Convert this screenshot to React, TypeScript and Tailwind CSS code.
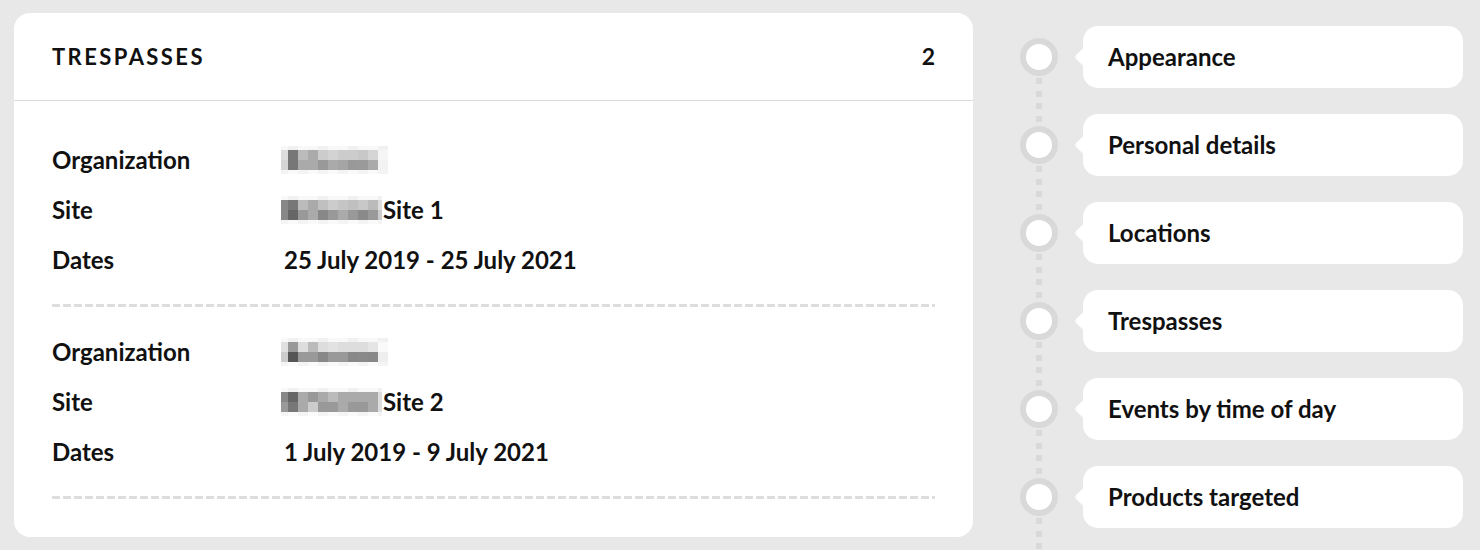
import React from "react";

type Cell = string;

interface MosaicProps {
  widths: number[];
  rows: Cell[][];
}

// pixelated (redacted) text block
function Mosaic({ widths, rows }: MosaicProps) {
  const total = widths.reduce((a, b) => a + b, 0);
  const rowH = 10;
  const h = rows.length * rowH + 8;
  let x = 0;
  const xs = widths.map((w) => {
    const v = x;
    x += w;
    return v;
  });
  return (
    <svg width={total} height={h} viewBox={`0 0 ${total} ${h}`} className="block shrink-0 -ml-[2px]" shapeRendering="crispEdges">
      {widths.map((w, i) => (
        <rect key={`t${i}`} x={xs[i]} y={0} width={w} height={4} fill={i % 3 === 1 ? "#f1f1f1" : "#f8f8f8"} />
      ))}
      {rows.map((row, r) =>
        row.map((c, i) => <rect key={`${r}-${i}`} x={xs[i]} y={4 + r * rowH} width={widths[i]} height={rowH} fill={c} />)
      )}
      {widths.map((w, i) => (
        <rect key={`b${i}`} x={xs[i]} y={4 + rows.length * rowH} width={w} height={4} fill={i % 2 === 0 ? "#f4f4f4" : "#fafafa"} />
      ))}
    </svg>
  );
}

const orgWidths = [7, 10, 10, 10, 10, 10, 10, 10, 10, 10, 10];
const siteWidths = [7, 10, 10, 10, 10, 10, 10, 10, 10, 10, 4];

const trespasses = [
  {
    org: [
      ["#dddddd", "#777777", "#bbbbbb", "#aaaaaa", "#cccccc", "#d3d3d3", "#cccccc", "#cccccc", "#c8c8c8", "#d5d5d5", "#f6f6f6"],
      ["#d5d5d5", "#777777", "#aaaaaa", "#aaaaaa", "#999999", "#aaaaaa", "#a5a5a5", "#999999", "#9a9a9a", "#aaaaaa", "#f3f3f3"],
    ],
    site: [
      ["#888888", "#777777", "#bbbbbb", "#aaaaaa", "#c0c0c0", "#cccccc", "#c5c5c5", "#c0c0c0", "#c8c8c8", "#bbbbbb", "#dddddd"],
      ["#888888", "#666666", "#999999", "#aaaaaa", "#888888", "#999999", "#aaaaaa", "#999999", "#8a8a8a", "#999999", "#cccccc"],
    ],
    siteName: "Site 1",
    dates: "25 July 2019 - 25 July 2021",
  },
  {
    org: [
      ["#e0e0e0", "#999999", "#dddddd", "#bbbbbb", "#dddddd", "#e2e2e2", "#dddddd", "#dddddd", "#dddddd", "#e5e5e5", "#fafafa"],
      ["#cccccc", "#555555", "#999999", "#999999", "#888888", "#999999", "#999999", "#888888", "#8a8a8a", "#888888", "#eeeeee"],
    ],
    site: [
      ["#888888", "#666666", "#aaaaaa", "#999999", "#aaaaaa", "#bbbbbb", "#aaaaaa", "#aaaaaa", "#aaaaaa", "#aaaaaa", "#dddddd"],
      ["#999999", "#777777", "#aaaaaa", "#cccccc", "#999999", "#999999", "#aaaaaa", "#999999", "#999999", "#aaaaaa", "#dddddd"],
    ],
    siteName: "Site 2",
    dates: "1 July 2019 - 9 July 2021",
  },
];

const sections = ["Appearance", "Personal details", "Locations", "Trespasses", "Events by time of day", "Products targeted"];

export default function App() {
  return (
    <div
      className="h-[550px] overflow-hidden bg-[#e8e8e8] flex items-start pt-[13px] pl-[14px] text-[#111]"
      style={{ fontFamily: "Lato, 'Noto Sans', sans-serif" }}
    >
      <div className="w-[959px] bg-white rounded-[16px]">
        <div className="h-[88px] flex items-center justify-between px-[38px] border-b border-[#dcdcdc]">
          <h2 className="text-[22px] font-bold tracking-[0.11em] uppercase">Trespasses</h2>
          <span className="text-[23px] font-bold">2</span>
        </div>
        <div className="px-[38px] pt-[34px] pb-[38px]">
          {trespasses.map((t, i) => (
            <div key={i} className={i > 0 ? "pt-[20px]" : ""}>
              <div className="text-[24px] font-bold leading-[50px]">
                <div className="flex items-center">
                  <span className="w-[231px]">Organization</span>
                  <Mosaic widths={orgWidths} rows={t.org} />
                </div>
                <div className="flex items-center">
                  <span className="w-[231px]">Site</span>
                  <Mosaic widths={siteWidths} rows={t.site} />
                  <span className="ml-[1px]">{t.siteName}</span>
                </div>
                <div className="flex items-center">
                  <span className="w-[231px]">Dates</span>
                  <span className="ml-[1px]">{t.dates}</span>
                </div>
              </div>
              <div className="mt-[19px] h-[3px] bg-[repeating-linear-gradient(90deg,#dddddd_0_8px,transparent_8px_11px)]" />
            </div>
          ))}
        </div>
      </div>

      <div className="relative ml-[47px] w-[443px]">
        <div className="absolute left-[16px] top-[40px] -bottom-[40px] w-[6px] bg-[repeating-linear-gradient(180deg,#d9d9d9_0_6px,transparent_6px_12.571px)]" />
        {sections.map((s) => (
          <div key={s} className="relative h-[88px] flex items-center">
            <div className="w-[38px] h-[38px] rounded-full border-[6px] border-[#d9d9d9] bg-white shrink-0" />
            <div className="relative ml-[25px] flex-1 h-[62px] bg-white rounded-[15px] flex items-center pl-[25px]">
              <div className="absolute -left-[6px] top-1/2 -translate-y-1/2 w-[13px] h-[13px] bg-white rotate-45 rounded-[2px]" />
              <span className="relative text-[24px] font-bold">{s}</span>
            </div>
          </div>
        ))}
      </div>
    </div>
  );
}
